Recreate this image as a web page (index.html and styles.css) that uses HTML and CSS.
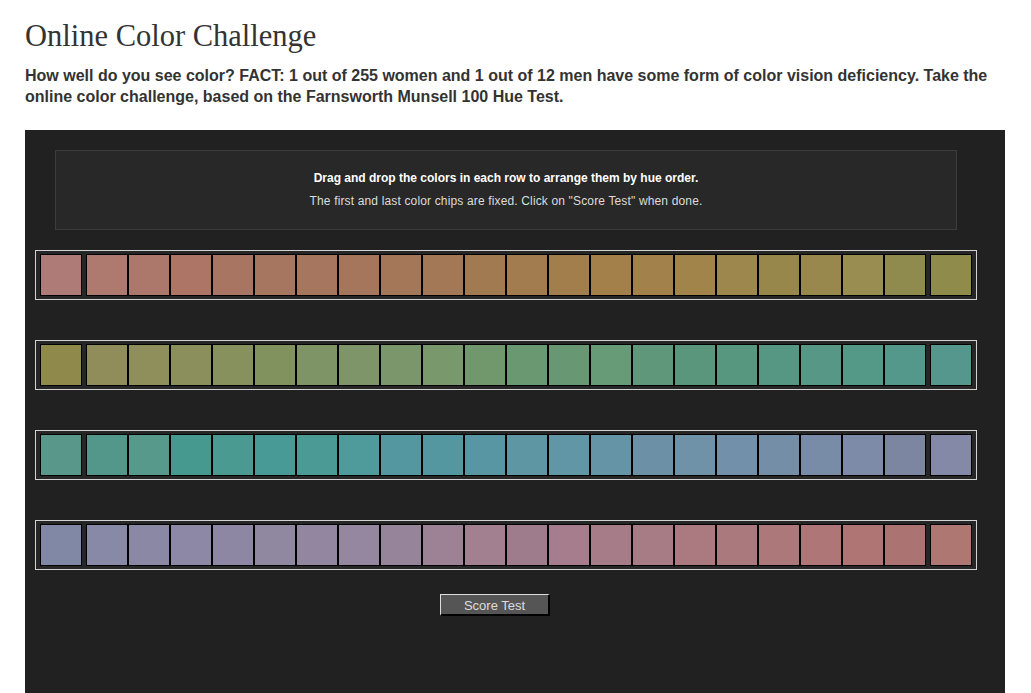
FILE: index.html
```html
<!DOCTYPE html>
<html lang="en">
<head>
<meta charset="utf-8">
<title>Online Color Challenge</title>
<link rel="stylesheet" href="styles.css">
</head>
<body>
<div class="page">
  <h1 class="title">Online Color Challenge</h1>
  <p class="intro">How well do you see color? FACT: 1 out of 255 women and 1 out of 12 men have some form of color vision deficiency. Take the online color challenge, based on the Farnsworth Munsell 100 Hue Test.</p>
  <div class="panel">
    <div class="content">
      <div class="instructions">
        <p class="lead">Drag and drop the colors in each row to arrange them by hue order.</p>
        <p class="sub">The first and last color chips are fixed. Click on "Score Test" when done.</p>
      </div>

      <div class="row">
        <span class="chip" style="background:#ae7b76"></span>
        <div class="chips">
          <span class="chip" style="background:#ae7a70"></span>
          <span class="chip" style="background:#ad786c"></span>
          <span class="chip" style="background:#ad7566"></span>
          <span class="chip" style="background:#a87563"></span>
          <span class="chip" style="background:#a67661"></span>
          <span class="chip" style="background:#a6765e"></span>
          <span class="chip" style="background:#a5765b"></span>
          <span class="chip" style="background:#a47759"></span>
          <span class="chip" style="background:#a27857"></span>
          <span class="chip" style="background:#a27a52"></span>
          <span class="chip" style="background:#a27c4f"></span>
          <span class="chip" style="background:#a37e4d"></span>
          <span class="chip" style="background:#a3804a"></span>
          <span class="chip" style="background:#a2814a"></span>
          <span class="chip" style="background:#a0844a"></span>
          <span class="chip" style="background:#9e874c"></span>
          <span class="chip" style="background:#98874b"></span>
          <span class="chip" style="background:#98884e"></span>
          <span class="chip" style="background:#9a8d51"></span>
          <span class="chip" style="background:#8f8a4e"></span>
        </div>
        <span class="chip" style="background:#8f8c4b"></span>
      </div>

      <div class="row">
        <span class="chip" style="background:#8f8a4c"></span>
        <div class="chips">
          <span class="chip" style="background:#918d5b"></span>
          <span class="chip" style="background:#8e8f5a"></span>
          <span class="chip" style="background:#8a8f5c"></span>
          <span class="chip" style="background:#86915e"></span>
          <span class="chip" style="background:#82925f"></span>
          <span class="chip" style="background:#7f9466"></span>
          <span class="chip" style="background:#7d9569"></span>
          <span class="chip" style="background:#7b966b"></span>
          <span class="chip" style="background:#79986c"></span>
          <span class="chip" style="background:#71976d"></span>
          <span class="chip" style="background:#6a9870"></span>
          <span class="chip" style="background:#679873"></span>
          <span class="chip" style="background:#679a77"></span>
          <span class="chip" style="background:#5f977a"></span>
          <span class="chip" style="background:#5a967c"></span>
          <span class="chip" style="background:#58977f"></span>
          <span class="chip" style="background:#569783"></span>
          <span class="chip" style="background:#569786"></span>
          <span class="chip" style="background:#549888"></span>
          <span class="chip" style="background:#53988a"></span>
        </div>
        <span class="chip" style="background:#56978d"></span>
      </div>

      <div class="row">
        <span class="chip" style="background:#58978a"></span>
        <div class="chips">
          <span class="chip" style="background:#52978a"></span>
          <span class="chip" style="background:#57998a"></span>
          <span class="chip" style="background:#45998e"></span>
          <span class="chip" style="background:#4a9a91"></span>
          <span class="chip" style="background:#489a96"></span>
          <span class="chip" style="background:#4c9a95"></span>
          <span class="chip" style="background:#4f9a9b"></span>
          <span class="chip" style="background:#5597a0"></span>
          <span class="chip" style="background:#5497a1"></span>
          <span class="chip" style="background:#5796a2"></span>
          <span class="chip" style="background:#5e96a4"></span>
          <span class="chip" style="background:#6196a6"></span>
          <span class="chip" style="background:#6594a6"></span>
          <span class="chip" style="background:#6c91a7"></span>
          <span class="chip" style="background:#6f92a8"></span>
          <span class="chip" style="background:#7290a9"></span>
          <span class="chip" style="background:#758ea8"></span>
          <span class="chip" style="background:#788ba7"></span>
          <span class="chip" style="background:#7d8aa8"></span>
          <span class="chip" style="background:#7c86a0"></span>
        </div>
        <span class="chip" style="background:#8589a8"></span>
      </div>

      <div class="row">
        <span class="chip" style="background:#8088a5"></span>
        <div class="chips">
          <span class="chip" style="background:#8789a7"></span>
          <span class="chip" style="background:#8a88a5"></span>
          <span class="chip" style="background:#8c88a6"></span>
          <span class="chip" style="background:#8e87a4"></span>
          <span class="chip" style="background:#9087a0"></span>
          <span class="chip" style="background:#9386a0"></span>
          <span class="chip" style="background:#9687a0"></span>
          <span class="chip" style="background:#96849a"></span>
          <span class="chip" style="background:#9c8294"></span>
          <span class="chip" style="background:#a2808f"></span>
          <span class="chip" style="background:#9f7c8c"></span>
          <span class="chip" style="background:#a67d8c"></span>
          <span class="chip" style="background:#a67c88"></span>
          <span class="chip" style="background:#a87c84"></span>
          <span class="chip" style="background:#aa7a80"></span>
          <span class="chip" style="background:#aa797d"></span>
          <span class="chip" style="background:#ad787a"></span>
          <span class="chip" style="background:#af7678"></span>
          <span class="chip" style="background:#ae7574"></span>
          <span class="chip" style="background:#ab7472"></span>
        </div>
        <span class="chip" style="background:#ae7772"></span>
      </div>

      <div class="actions">
        <button class="score" type="button">Score Test</button>
      </div>
    </div>
  </div>
</div>
</body>
</html>
```

FILE: styles.css
```css
html, body {
  margin: 0;
  padding: 0;
  background: #ffffff;
}

.page {
  padding: 18px 0 0 25px;
  width: 980px;
}

.title {
  margin: 0;
  font-family: "Liberation Serif", serif;
  font-weight: normal;
  font-size: 30.5px;
  line-height: 36px;
  color: #333333;
}

.intro {
  margin: 11px 0 0;
  font-family: "Liberation Sans", Arial, sans-serif;
  font-weight: bold;
  font-size: 16px;
  line-height: 21px;
  color: #333333;
}

.panel {
  margin-top: 23px;
  background: #212121;
  min-height: 563px;
  padding: 20px 0 0 10px;
}

.content {
  width: 942px;
}

.instructions {
  margin: 0 20px;
  height: 78px;
  border: 1px solid #3c3c3c;
  background: #282828;
  text-align: center;
  font-family: "Liberation Sans", Arial, sans-serif;
}

.lead {
  margin: 20px 0 0;
  color: #ffffff;
  font-weight: bold;
  font-size: 12px;
  line-height: 14px;
}

.sub {
  margin: 9px 0 0;
  color: #dddddd;
  font-size: 12px;
  letter-spacing: 0.15px;
  line-height: 14px;
}

.row {
  margin-top: 20px;
  display: flex;
  gap: 4px;
  padding: 3px 4px;
  border: 1px solid #d2d2d2;
  background: #262626;
}

.row + .row {
  margin-top: 40px;
}

.chips {
  display: flex;
}

.chip {
  display: block;
  width: 40px;
  height: 40px;
  border: 1px solid #000000;
}

.actions {
  margin-top: 24px;
  padding-left: 405px;
}

.score {
  display: block;
  width: 110px;
  height: 22px;
  margin: 0;
  padding: 1px 0 0;
  background: #555555;
  color: #dddddd;
  font-family: "Liberation Sans", Arial, sans-serif;
  font-size: 13px;
  border-top: 1px solid #dddddd;
  border-left: 1px solid #dddddd;
  border-right: 2px solid #000000;
  border-bottom: 2px solid #000000;
}
```
